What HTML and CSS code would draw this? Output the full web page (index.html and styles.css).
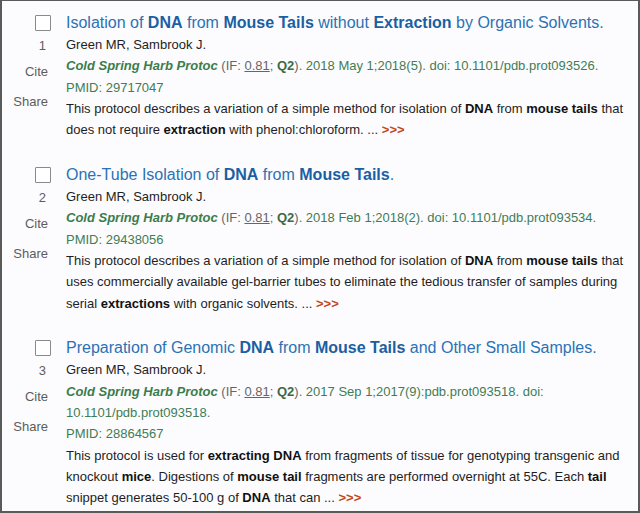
FILE: index.html
```html
<!DOCTYPE html>
<html>
<head>
<meta charset="utf-8">
<link rel="stylesheet" href="styles.css">
</head>
<body>
<div class="frame">
  <div class="item">
    <div class="side">
      <span class="check"></span>
      <span class="num">1</span>
      <span class="act cite">Cite</span>
      <span class="act share">Share</span>
    </div>
    <div class="main">
      <div class="title">Isolation of <b>DNA</b> from <b>Mouse Tails</b> without <b>Extraction</b> by Organic Solvents.</div>
      <div class="authors">Green MR, Sambrook J.</div>
      <div class="cit"><span class="journal">Cold Spring Harb Protoc</span> <span class="if">(IF: <u>0.81</u>; <b>Q2</b>)</span>. 2018 May 1;2018(5). doi: 10.1101/pdb.prot093526.</div>
      <div class="pmid">PMID: 29717047</div>
      <div class="abs">This protocol describes a variation of a simple method for isolation of <b>DNA</b> from <b>mouse tails</b> that does not require <b>extraction</b> with phenol:chloroform. ... <span class="more">&gt;&gt;&gt;</span></div>
    </div>
  </div>
  <div class="item">
    <div class="side">
      <span class="check"></span>
      <span class="num">2</span>
      <span class="act cite">Cite</span>
      <span class="act share">Share</span>
    </div>
    <div class="main">
      <div class="title">One-Tube Isolation of <b>DNA</b> from <b>Mouse Tails</b>.</div>
      <div class="authors">Green MR, Sambrook J.</div>
      <div class="cit"><span class="journal">Cold Spring Harb Protoc</span> <span class="if">(IF: <u>0.81</u>; <b>Q2</b>)</span>. 2018 Feb 1;2018(2). doi: 10.1101/pdb.prot093534.</div>
      <div class="pmid">PMID: 29438056</div>
      <div class="abs">This protocol describes a variation of a simple method for isolation of <b>DNA</b> from <b>mouse tails</b> that uses commercially available gel-barrier tubes to eliminate the tedious transfer of samples during serial <b>extractions</b> with organic solvents. ... <span class="more">&gt;&gt;&gt;</span></div>
    </div>
  </div>
  <div class="item">
    <div class="side">
      <span class="check"></span>
      <span class="num">3</span>
      <span class="act cite">Cite</span>
      <span class="act share">Share</span>
    </div>
    <div class="main">
      <div class="title">Preparation of Genomic <b>DNA</b> from <b>Mouse Tails</b> and Other Small Samples.</div>
      <div class="authors">Green MR, Sambrook J.</div>
      <div class="cit"><span class="journal">Cold Spring Harb Protoc</span> <span class="if">(IF: <u>0.81</u>; <b>Q2</b>)</span>. 2017 Sep 1;2017(9):pdb.prot093518. doi: 10.1101/pdb.prot093518.</div>
      <div class="pmid">PMID: 28864567</div>
      <div class="abs">This protocol is used for <b>extracting DNA</b> from fragments of tissue for genotyping transgenic and knockout <b>mice</b>. Digestions of <b>mouse tail</b> fragments are performed overnight at 55C. Each <b>tail</b> snippet generates 50-100 g of <b>DNA</b> that can ... <span class="more">&gt;&gt;&gt;</span></div>
    </div>
  </div>
</div>
</body>
</html>
```

FILE: styles.css
```css
html, body {
  margin: 0;
  padding: 0;
}
body {
  font-family: "Liberation Sans", Arial, sans-serif;
  background: #fdfdfe;
}
.frame {
  box-sizing: border-box;
  width: 640px;
  height: 513px;
  border: 2px solid #5a5a5a;
  border-top-width: 1px;
  background: #fcfcfe;
  padding-top: 11px;
  overflow: hidden;
}
.item {
  display: flex;
  margin-bottom: 23.6px;
}
.side {
  width: 46px;
  flex: none;
  display: flex;
  flex-direction: column;
  align-items: flex-end;
  color: #5c5c5c;
  font-size: 13px;
}
.check {
  display: block;
  width: 14px;
  height: 14px;
  border: 1px solid #8a8a8a;
  border-radius: 1px;
  background: #fff;
  margin-top: 3px;
  margin-right: -3px;
}
.num {
  margin-top: 7px;
  margin-right: 2px;
  line-height: 16px;
}
.act {
  line-height: 16px;
}
.cite {
  margin-top: 10px;
}
.share {
  margin-top: 14px;
}
.main {
  margin-left: 18px;
  flex: 1;
  font-size: 13px;
  line-height: 21.3px;
  color: #1e1e1e;
}
.title {
  font-size: 16px;
  line-height: 22px;
  color: #2b72b4;
}
.title b {
  color: #1b5fa3;
}
.cit {
  color: #3f7d55;
}
.journal {
  font-weight: bold;
  font-style: italic;
  color: #3b7d4a;
}
.if {
  color: #666;
}
.if b {
  color: #3c6a48;
}
.pmid {
  color: #3f7d55;
}
.abs b {
  color: #111;
}
.more {
  color: #c0461c;
  font-weight: bold;
}
```
